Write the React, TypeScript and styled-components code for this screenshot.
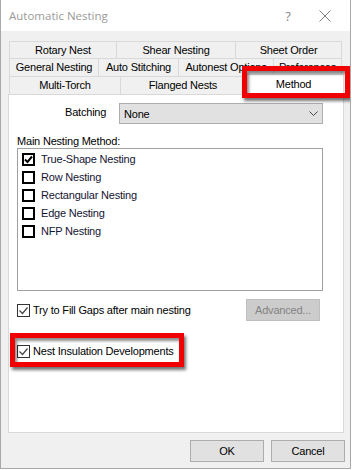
import React from "react";
import styled, { createGlobalStyle } from "styled-components";

const Global = createGlobalStyle`
  html, body { margin: 0; padding: 0; background: #ffffff; }
  * { box-sizing: border-box; }
  body { font-family: "Liberation Sans", Arial, sans-serif; font-size: 11px; color: #000; letter-spacing: -0.2px; }
`;

const Window = styled.div`
  position: relative;
  width: 351px;
  height: 469px;
  background: #f0f0f0;
  border: 1px solid #a9a9a9;
  border-top: none;
  display: flex;
  flex-direction: column;
  overflow: hidden;
`;

const TitleBar = styled.div`
  height: 31px;
  background: #ffffff;
  display: flex;
  align-items: center;
  padding-left: 8px;
  flex-shrink: 0;
`;

const Title = styled.div`
  font-family: "Open Sans", "Noto Sans", sans-serif;
  font-size: 11.5px;
  letter-spacing: 0;
  color: #9a9a9a;
  flex: 1;
  margin-top: -1px;
`;

const TitleButton = styled.div<{ $w: number }>`
  width: ${(p) => p.$w}px;
  height: 31px;
  display: flex;
  align-items: center;
  justify-content: center;
  color: #8a8a8a;
  font-family: "Open Sans", sans-serif;
  font-size: 13px;
`;

const Body = styled.div`
  flex: 1;
  display: flex;
  flex-direction: column;
  padding: 10px 0 0 7px;
`;

const TabStrip = styled.div`
  display: flex;
  flex-direction: column;
  padding-left: 1px;
`;

const TabRow = styled.div<{ $h: number }>`
  display: flex;
  height: ${(p) => p.$h}px;
  position: relative;
`;

const Tab = styled.div<{ $w: number; $selected?: boolean; $first?: boolean }>`
  width: ${(p) => p.$w}px;
  height: 100%;
  border: 1px solid #d9d9d9;
  border-bottom: none;
  margin-left: ${(p) => (p.$first ? 0 : -1)}px;
  background: #f0f0f0;
  display: flex;
  align-items: center;
  justify-content: center;
  white-space: nowrap;
  overflow: hidden;
  padding-bottom: 1px;
  ${(p) =>
    p.$selected &&
    `
    background: #ffffff;
    height: calc(100% + 4px);
    margin-top: -2px;
    margin-left: -3px;
    position: relative;
    z-index: 2;
    padding-bottom: 3px;
  `}
`;

const Panel = styled.div`
  width: 336px;
  height: 339px;
  background: #ffffff;
  border: 1px solid #d9d9d9;
  display: flex;
  flex-direction: column;
  padding: 8px 0 0 8px;
`;

const FieldRow = styled.div`
  display: flex;
  align-items: center;
  padding-left: 48px;
`;

const FieldLabel = styled.div`
  width: 54px;
  margin-top: -4px;
`;

const Combo = styled.div`
  width: 204px;
  height: 21px;
  background: #e1e1e1;
  border: 1px solid #adadad;
  display: flex;
  align-items: center;
  justify-content: space-between;
  padding: 0 4px 0 4px;
`;

const GroupLabel = styled.div`
  margin-top: 11px;
  line-height: 13px;
  height: 13px;
  color: #000;
`;

const ListBox = styled.div`
  width: 306px;
  height: 143px;
  border: 1px solid #a0a0a0;
  padding: 4px 0 0 4px;
  display: flex;
  flex-direction: column;
`;

const ListItem = styled.div`
  height: 18px;
  display: flex;
  align-items: flex-start;
  gap: 6px;
  color: #141432;
`;

const ItemText = styled.span`
  line-height: 13px;
`;

const BoxThick = styled.div`
  width: 13px;
  height: 13px;
  border: 2px solid #000;
  background: #fff;
  display: flex;
  align-items: center;
  justify-content: center;
`;

const BoxThin = styled.div`
  width: 13px;
  height: 13px;
  border: 1px solid #333;
  background: #fff;
  display: flex;
  align-items: center;
  justify-content: center;
  flex-shrink: 0;
`;

const OptionRow = styled.div<{ $mt: number }>`
  margin-top: ${(p) => p.$mt}px;
  width: 306px;
  display: flex;
  align-items: center;
  justify-content: space-between;
`;

const CheckLabel = styled.label`
  display: flex;
  align-items: center;
  gap: 3px;
  color: #000;
  line-height: 13px;
`;

const DisabledButton = styled.div`
  width: 74px;
  height: 22px;
  margin-right: 3px;
  background: #cccccc;
  border: 1px solid #bfbfbf;
  color: #838383;
  display: flex;
  align-items: center;
  justify-content: center;
`;

const Footer = styled.div`
  display: flex;
  justify-content: flex-end;
  gap: 7px;
  padding-right: 5px;
  margin-top: 7px;
`;

const Button = styled.div`
  width: 74px;
  height: 22px;
  background: #e1e1e1;
  border: 1px solid #adadad;
  display: flex;
  align-items: center;
  justify-content: center;
  color: #000;
`;

const Highlight = styled.div<{ $x: number; $y: number; $w: number; $h: number }>`
  position: absolute;
  left: ${(p) => p.$x}px;
  top: ${(p) => p.$y}px;
  width: ${(p) => p.$w}px;
  height: ${(p) => p.$h}px;
  border: 5px solid #f00000;
  box-shadow: 2px 3px 3px rgba(0, 0, 0, 0.55), inset 2px 3px 3px rgba(0, 0, 0, 0.45);
  z-index: 5;
  pointer-events: none;
`;

const ThickCheck = () => (
  <svg width="9" height="9" viewBox="0 0 9 9">
    <path d="M1 4.5 L3.5 7 L8 1.5" stroke="#000" strokeWidth="2" fill="none" />
  </svg>
);

const ThinCheck = () => (
  <svg width="11" height="11" viewBox="0 0 11 11">
    <path d="M1.5 5.5 L4.5 8.5 L9.5 2.5" stroke="#444" strokeWidth="1.2" fill="none" />
  </svg>
);

const Chevron = () => (
  <svg width="9" height="6" viewBox="0 0 9 6">
    <path d="M0.5 0.5 L4.5 4.5 L8.5 0.5" stroke="#444" strokeWidth="1" fill="none" />
  </svg>
);

const CloseIcon = () => (
  <svg width="12" height="12" viewBox="0 0 12 12">
    <path d="M0.5 0.5 L11.5 11.5 M11.5 0.5 L0.5 11.5" stroke="#7a7a7a" strokeWidth="1" fill="none" />
  </svg>
);

const methods = [
  { label: "True-Shape Nesting", checked: true },
  { label: "Row Nesting", checked: false },
  { label: "Rectangular Nesting", checked: false },
  { label: "Edge Nesting", checked: false },
  { label: "NFP Nesting", checked: false },
];

export default function App() {
  return (
    <>
      <Global />
      <Window>
        <TitleBar>
          <Title>Automatic Nesting</Title>
          <TitleButton $w={24}>?</TitleButton>
          <TitleButton $w={50}>
            <CloseIcon />
          </TitleButton>
        </TitleBar>
        <Body>
          <TabStrip>
            <TabRow $h={17}>
              <Tab $w={108} $first>Rotary Nest</Tab>
              <Tab $w={120}>Shear Nesting</Tab>
              <Tab $w={107}>Sheet Order</Tab>
            </TabRow>
            <TabRow $h={18}>
              <Tab $w={90} $first>General Nesting</Tab>
              <Tab $w={81}>Auto Stitching</Tab>
              <Tab $w={96}>Autonest Options</Tab>
              <Tab $w={69}>Preferences</Tab>
            </TabRow>
            <TabRow $h={18}>
              <Tab $w={112} $first>Multi-Torch</Tab>
              <Tab $w={126}>Flanged Nests</Tab>
              <Tab $w={101} $selected>Method</Tab>
            </TabRow>
          </TabStrip>
          <Panel>
            <FieldRow>
              <FieldLabel>Batching</FieldLabel>
              <Combo>
                <span>None</span>
                <Chevron />
              </Combo>
            </FieldRow>
            <GroupLabel>Main Nesting Method:</GroupLabel>
            <ListBox>
              {methods.map((m) => (
                <ListItem key={m.label}>
                  <BoxThick>{m.checked && <ThickCheck />}</BoxThick>
                  <ItemText>{m.label}</ItemText>
                </ListItem>
              ))}
            </ListBox>
            <OptionRow $mt={8}>
              <CheckLabel>
                <BoxThin>
                  <ThinCheck />
                </BoxThin>
                Try to Fill Gaps after main nesting
              </CheckLabel>
              <DisabledButton>Advanced...</DisabledButton>
            </OptionRow>
            <OptionRow $mt={24}>
              <CheckLabel>
                <BoxThin>
                  <ThinCheck />
                </BoxThin>
                Nest Insulation Developments
              </CheckLabel>
            </OptionRow>
          </Panel>
          <Footer>
            <Button>OK</Button>
            <Button>Cancel</Button>
          </Footer>
        </Body>
        <Highlight $x={241} $y={66} $w={108} $h={32} />
        <Highlight $x={9} $y={333} $w={174} $h={34} />
      </Window>
    </>
  );
}
